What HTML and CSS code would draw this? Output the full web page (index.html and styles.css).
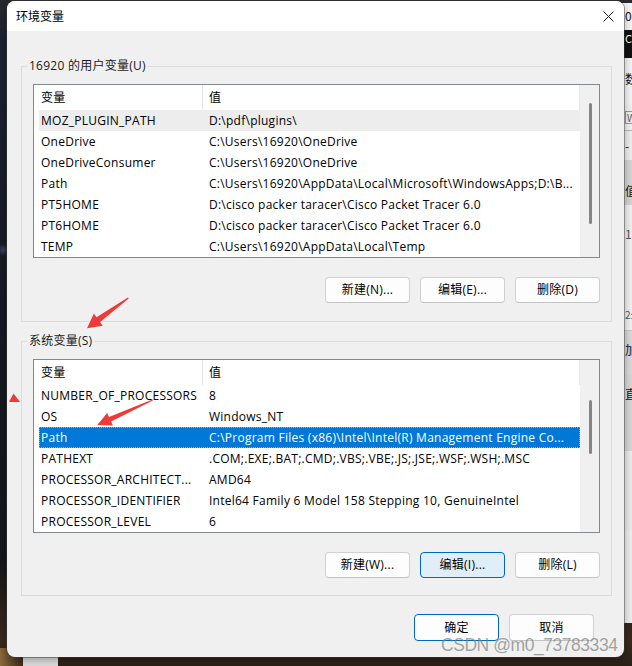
FILE: index.html
```html
<!DOCTYPE html>
<html lang="zh-CN">
<head>
<meta charset="utf-8">
<title>环境变量</title>
<link rel="stylesheet" href="styles.css">
</head>
<body>
<div class="desktop">
  <div class="side-window">
    <div class="sw-block sw-a">0.</div>
    <div class="sw-block sw-b">C:</div>
    <div class="sw-block sw-c">数</div>
    <div class="sw-block sw-d"><span class="sw-box">W</span></div>
    <div class="sw-block sw-e">-</div>
    <div class="sw-block sw-f">值</div>
    <div class="sw-block sw-g">1</div>
    <div class="sw-block sw-h">2:</div>
    <div class="sw-block sw-i">加</div>
    <div class="sw-block sw-j">直</div>
    <div class="sw-block sw-k"></div>
    <div class="sw-block sw-l"></div>
  </div>
  <div class="bottom-window"></div>
  <div class="bottom-warm"></div>

  <section class="dialog">
    <header class="titlebar">
      <span class="title">环境变量</span>
      <span class="close">
        <svg width="11" height="11" viewBox="0 0 11 11"><path d="M0.5 0.5 L10.5 10.5 M10.5 0.5 L0.5 10.5" stroke="#1a1a1a" stroke-width="1" fill="none"/></svg>
      </span>
    </header>
    <div class="dialog-body">
      <fieldset class="group group-user">
        <legend>16920 的用户变量(U)</legend>
        <div class="listview">
          <div class="lv-main">
            <div class="lv-header"><div class="hcell hname">变量</div><div class="hcell hvalue">值</div></div>
            <div class="row hover"><span class="cell name">MOZ_PLUGIN_PATH</span><span class="cell value">D:\pdf\plugins\</span></div>
            <div class="row"><span class="cell name">OneDrive</span><span class="cell value">C:\Users\16920\OneDrive</span></div>
            <div class="row"><span class="cell name">OneDriveConsumer</span><span class="cell value">C:\Users\16920\OneDrive</span></div>
            <div class="row"><span class="cell name">Path</span><span class="cell value">C:\Users\16920\AppData\Local\Microsoft\WindowsApps;D:\B...</span></div>
            <div class="row"><span class="cell name">PT5HOME</span><span class="cell value">D:\cisco packer taracer\Cisco Packet Tracer 6.0</span></div>
            <div class="row"><span class="cell name">PT6HOME</span><span class="cell value">D:\cisco packer taracer\Cisco Packet Tracer 6.0</span></div>
            <div class="row"><span class="cell name">TEMP</span><span class="cell value">C:\Users\16920\AppData\Local\Temp</span></div>
          </div>
          <div class="lv-scroll"><div class="thumb" style="margin-top:18px;height:121px"></div></div>
        </div>
        <div class="btn-row">
          <button class="btn">新建(N)...</button>
          <button class="btn">编辑(E)...</button>
          <button class="btn">删除(D)</button>
        </div>
      </fieldset>

      <fieldset class="group group-system">
        <legend>系统变量(S)</legend>
        <div class="listview">
          <div class="lv-main">
            <div class="lv-header"><div class="hcell hname">变量</div><div class="hcell hvalue">值</div></div>
            <div class="row"><span class="cell name">NUMBER_OF_PROCESSORS</span><span class="cell value">8</span></div>
            <div class="row"><span class="cell name">OS</span><span class="cell value">Windows_NT</span></div>
            <div class="row selected"><span class="cell name">Path</span><span class="cell value">C:\Program Files (x86)\Intel\Intel(R) Management Engine Co...</span></div>
            <div class="row"><span class="cell name">PATHEXT</span><span class="cell value">.COM;.EXE;.BAT;.CMD;.VBS;.VBE;.JS;.JSE;.WSF;.WSH;.MSC</span></div>
            <div class="row"><span class="cell name">PROCESSOR_ARCHITECT...</span><span class="cell value">AMD64</span></div>
            <div class="row"><span class="cell name">PROCESSOR_IDENTIFIER</span><span class="cell value">Intel64 Family 6 Model 158 Stepping 10, GenuineIntel</span></div>
            <div class="row"><span class="cell name">PROCESSOR_LEVEL</span><span class="cell value">6</span></div>
          </div>
          <div class="lv-scroll"><div class="thumb" style="margin-top:40px;height:54px"></div></div>
        </div>
        <div class="btn-row">
          <button class="btn">新建(W)...</button>
          <button class="btn btn-focus">编辑(I)...</button>
          <button class="btn">删除(L)</button>
        </div>
      </fieldset>

      <div class="footer">
        <button class="btn btn-default">确定</button>
        <button class="btn">取消</button>
      </div>
    </div>
  </section>

  <svg class="annotations" width="632" height="666" viewBox="0 0 632 666">
    <polygon fill="#ef3a3a" points="128.7,298.6 100.1,322.1 102.7,325.8 87,328.3 93.9,313.6 96.5,317.3 127.9,297.4"/>
    <polygon fill="#ef3a3a" points="152.9,400.5 111.1,421.5 112.9,425.6 97.3,425 107.2,412.9 109,417 152.5,399.5"/>
    <polygon fill="#ef3a3a" points="9,402 13.5,393.5 20,402"/>
  </svg>
  <div class="watermark">CSDN @m0_73783334</div>
</div>
</body>
</html>
```

FILE: styles.css
```css
* { box-sizing: border-box; }

html, body {
  margin: 0;
  padding: 0;
}

body {
  width: 632px;
  height: 666px;
  overflow: hidden;
  font-family: "Open Sans", "Noto Sans CJK SC", sans-serif;
  font-size: 12px;
  letter-spacing: 0.25px;
  color: #000;
}

.desktop {
  position: relative;
  width: 632px;
  height: 666px;
  overflow: hidden;
  background:
    radial-gradient(circle at 3px 250px, #3a4660 0, rgba(0,0,0,0) 6px),
    linear-gradient(180deg, #2a2a30 0px, #1e2230 40px, #171a24 300px, #15161b 560px, #3a2a1c 640px, #2a2018 666px);
}

/* Other window peeking out on the right */
.side-window {
  position: absolute;
  left: 620px;
  top: 3px;
  width: 12px;
  height: 620px;
  display: flex;
  flex-direction: column;
  overflow: hidden;
  font-family: "Noto Sans CJK SC", sans-serif;
  font-size: 12px;
  letter-spacing: 0;
  line-height: 14px;
  color: #111;
}
.sw-block {
  padding-left: 5px;
  white-space: nowrap;
  overflow: hidden;
  flex-shrink: 0;
}
.sw-a { height: 27px; background: #f6f6f6; padding-top: 6px; }
.sw-b { height: 28px; background: #111; color: #fff; font-size: 11px; line-height: 13px; padding-top: 2px; }
.sw-c { height: 47px; background: #f5f5f5; padding-top: 14px; }
.sw-d { height: 25px; background: #f2f2f2; padding-top: 5px; }
.sw-box { display: inline-block; border: 1px solid #999; font-size: 10px; line-height: 11px; color: #666; padding: 0 1px; }
.sw-e { height: 30px; background: #efefef; border-top: 1px solid #bbb; padding-top: 8px; }
.sw-f { height: 45px; background: #d5d5d5; padding-top: 24px; }
.sw-g { height: 95px; background: #f1f1f1; padding-top: 22px; color: #555; }
.sw-h { height: 30px; background: #f1f1f1; padding-top: 8px; color: #555; font-size: 10px; }
.sw-i { height: 45px; background: #dadada; border-top: 1px solid #c8c8c8; padding-top: 12px; }
.sw-j { height: 76px; background: #d7d7d7; padding-top: 12px; }
.sw-k { height: 80px; background: #ececec; }
.sw-l { flex: 1; background: #efefef; }

.bottom-window {
  position: absolute;
  left: 23px;
  top: 657px;
  width: 35px;
  height: 9px;
  background: #dcdcdc;
}
.bottom-warm {
  position: absolute;
  left: 0;
  top: 648px;
  width: 23px;
  height: 18px;
  background: linear-gradient(90deg, #8a6a3a, #3a2a18);
}

/* Dialog window */
.dialog {
  position: absolute;
  left: 7px;
  top: 1px;
  width: 617px;
  height: 656px;
  background: #f0f0f0;
  border-radius: 8px;
  overflow: hidden;
  box-shadow: 0 0 0 1px rgba(60, 60, 60, 0.45), 0 2px 10px rgba(0, 0, 0, 0.35);
  display: flex;
  flex-direction: column;
}

.titlebar {
  height: 30px;
  background: #ffffff;
  display: flex;
  align-items: center;
  justify-content: space-between;
  padding: 0 9px 0 9px;
  flex-shrink: 0;
}
.title {
  font-family: "Noto Sans CJK SC", sans-serif;
  font-size: 12px;
  letter-spacing: 0;
  line-height: 16px;
  color: #000;
}
.close {
  display: flex;
  width: 11px;
  height: 11px;
  margin-right: 1px;
}

.dialog-body {
  padding-top: 27px;
  display: flex;
  flex-direction: column;
}

.group {
  margin: 0 12px 0 14px;
  padding: 0 11px 18px 11px;
  border: 1px solid #dcdcdc;
  min-width: 0;
}
.group-system {
  margin-top: 11px;
  padding-bottom: 17px;
}
.group legend {
  padding: 0 2px;
  margin-left: -6px;
  font-size: 12px;
  line-height: 16px;
  color: #1a1a1a;
}

.listview {
  margin-top: 10px;
  border: 1px solid #83878e;
  background: #ffffff;
  display: flex;
  height: 174px;
}
.lv-main {
  flex: 1;
  min-width: 0;
  display: flex;
  flex-direction: column;
}
.lv-header {
  height: 25px;
  display: flex;
  flex-shrink: 0;
}
.hcell {
  line-height: 25px;
  border-right: 1px solid #e5e5e5;
  white-space: nowrap;
}
.hname {
  width: 169px;
  padding-left: 7px;
}
.hvalue {
  flex: 1;
  padding-left: 6px;
}

.row {
  height: 21px;
  margin-left: 5px;
  display: flex;
  line-height: 21px;
  flex-shrink: 0;
}
.row.hover {
  background: #ededed;
}
.row.selected {
  background: #0078d7;
  color: #ffffff;
  outline: 1px dotted #f29a3a;
  outline-offset: -1px;
}
.cell {
  white-space: nowrap;
  overflow: hidden;
}
.cell.name {
  width: 164px;
  padding-left: 2px;
  flex-shrink: 0;
}
.cell.value {
  flex: 1;
  padding-left: 6px;
  min-width: 0;
}

.lv-scroll {
  width: 19px;
  background: #f0f0f0;
  display: flex;
  flex-direction: column;
  align-items: center;
  flex-shrink: 0;
}
.thumb {
  width: 3px;
  border-radius: 2px;
  background: #858585;
  margin-left: 1px;
}

.btn-row {
  margin-top: 19px;
  display: flex;
  justify-content: flex-end;
  gap: 10px;
}

.btn {
  width: 85px;
  height: 26px;
  padding: 0;
  border: 1px solid #d0d0d0;
  border-bottom-color: #c2c2c2;
  border-radius: 4px;
  background: #fdfdfd;
  font-family: "Open Sans", "Noto Sans CJK SC", sans-serif;
  font-size: 12px;
  letter-spacing: 0.25px;
  color: #000;
  line-height: 24px;
  text-align: center;
}
.btn-focus {
  background: #e0eef9;
  border: 1px solid #0067c0;
}
.btn-default {
  border: 1.5px solid #0067c0;
  background: #fdfdfd;
}

.footer {
  margin-top: 18px;
  padding-right: 30px;
  display: flex;
  justify-content: flex-end;
  gap: 10px;
}
.footer .btn {
  height: 27px;
}

.annotations {
  position: absolute;
  left: 0;
  top: 0;
  pointer-events: none;
}

.watermark {
  position: absolute;
  left: 441px;
  top: 635px;
  font-family: "Liberation Sans", sans-serif;
  font-size: 17.5px;
  letter-spacing: -0.45px;
  line-height: 20px;
  color: rgba(125, 125, 125, 0.7);
  white-space: nowrap;
}
```
